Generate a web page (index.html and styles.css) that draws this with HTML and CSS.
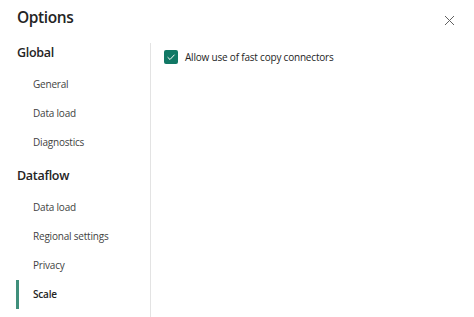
FILE: index.html
```html
<!DOCTYPE html>
<html>
<head>
    <title>Options</title>
    <meta name="viewport" content="width=device-width,initial-scale=1.0">
    <link rel="stylesheet" href="styles.css">
</head>
<body>
    <div class="dialog">
        <div class="header">
            <h1>Options</h1>
            <span class="close">
                <svg width="11" height="11" viewBox="0 0 11 11"><path d="M1 1L10 10M10 1L1 10" stroke="#616161" stroke-width="1" fill="none"/></svg>
            </span>
        </div>
        <div class="body">
            <ul class="nav">
                <li class="group">Global</li>
                <li class="item">General</li>
                <li class="item">Data load</li>
                <li class="item">Diagnostics</li>
                <li class="group second">Dataflow</li>
                <li class="item">Data load</li>
                <li class="item">Regional settings</li>
                <li class="item">Privacy</li>
                <li class="item selected">Scale</li>
            </ul>
            <div class="content">
                <label class="check">
                    <span class="box">
                        <svg width="10" height="10" viewBox="0 0 10 10"><path d="M1.6 5.2L4 7.5L8.5 2.7" stroke="#fff" stroke-width="1" fill="none"/></svg>
                    </span>
                    Allow use of fast copy connectors
                </label>
            </div>
        </div>
    </div>
</body>
</html>
```

FILE: styles.css
```css
body{
    margin: 0;
    font-family: "Open Sans", "Noto Sans", sans-serif;
    color: #242424;
    background: #fff;
}

.dialog{
    width: 474px;
    height: 317px;
    overflow: hidden;
}

.header{
    display: flex;
    justify-content: space-between;
    align-items: center;
    height: 36px;
    padding: 0 19px 0 17px;
}

.header h1{
    margin: 0;
    font-size: 15.5px;
    font-weight: 600;
    letter-spacing: -0.4px;
    margin-top: -3px;
}

.close{
    display: flex;
    margin-top: 5px;
}

.body{
    display: flex;
}

.nav{
    list-style: none;
    margin: 0;
    padding: 0 0 0 16px;
    width: 134px;
}

.group{
    height: 34px;
    line-height: 34px;
    font-size: 12.5px;
    font-weight: 600;
    letter-spacing: -0.3px;
    padding-left: 1px;
}

.group.second{
    margin-top: 2px;
}

.item{
    height: 29px;
    line-height: 29px;
    font-size: 10px;
    letter-spacing: -0.2px;
    color: #424242;
    padding-left: 17px;
}

.item.selected{
    font-weight: 600;
    color: #242424;
    border-left: 3px solid #3f8f7b;
    padding-left: 14px;
}

.content{
    flex: 1;
    margin-top: 7px;
    border-left: 1px solid #e3e3e3;
    padding: 7px 0 0 13px;
    height: 300px;
}

.check{
    display: flex;
    align-items: center;
    font-size: 10px;
    letter-spacing: -0.2px;
    color: #242424;
}

.box{
    display: flex;
    align-items: center;
    justify-content: center;
    width: 14px;
    height: 14px;
    background: #117865;
    border-radius: 2px;
    margin-right: 7px;
}
```
